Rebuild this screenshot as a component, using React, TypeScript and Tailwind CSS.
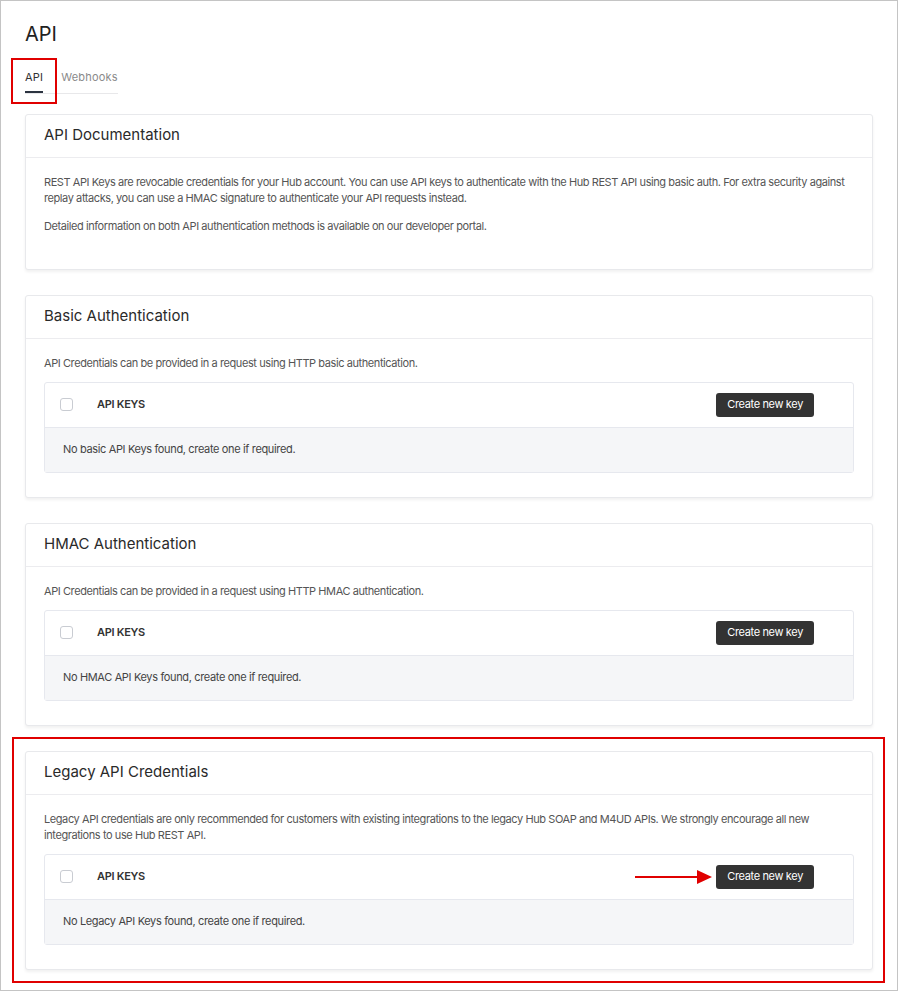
const font = { fontFamily: 'Inter, "Noto Sans", sans-serif' }

type KeysTableProps = {
  empty: string
  arrow?: boolean
}

const KeysTable = ({ empty, arrow }: KeysTableProps) => (
  <div className="rounded-[3px] border border-[#e6e8ee]">
    <div className="flex h-[44px] items-center pl-[15px] pr-[39px]">
      <span className="h-[13px] w-[13px] rounded-[3px] border border-[#c9ccd2] bg-white" />
      <span className="ml-[24px] text-[11px] font-semibold tracking-[-0.3px] text-[#333]">API KEYS</span>
      <div className="ml-auto flex items-center">
        {arrow && (
          <svg width="78" height="16" viewBox="0 0 78 16" className="mr-[3px]">
            <line x1="0" y1="8" x2="64" y2="8" stroke="#e00000" strokeWidth="2" />
            <polygon points="62,1 77,8 62,15" fill="#e00000" />
          </svg>
        )}
        <button className="h-[24px] rounded-[3px] bg-[#333333] px-[11px] text-[11px] tracking-[-0.35px] text-white">
          Create new key
        </button>
      </div>
    </div>
    <div className="flex h-[45px] items-center border-t border-[#e6e8ee] bg-[#f5f6f8] pl-[18px] text-[11px] tracking-[-0.35px] text-[#444]">
      {empty}
    </div>
  </div>
)

type CardProps = {
  title: string
  children: React.ReactNode
}

const Card = ({ title, children }: CardProps) => (
  <div className="rounded-[3px] border border-[#e8e9ec] bg-white shadow-[0_2px_3px_rgba(0,0,0,0.06)]">
    <div className="flex h-[43px] items-center border-b border-[#ececef] px-[18px] text-[15px] text-[#2a2a2a]">
      {title}
    </div>
    <div className="px-[18px] pt-[16px] pb-[24px]">{children}</div>
  </div>
)

const body = 'text-[11px] leading-[16px] tracking-[-0.42px] text-[#555]'

export default function App() {
  return (
    <div style={font} className="h-[991px] w-[898px] border border-[#c4c4c4] bg-white">
      <div className="px-[24px] pt-[20px]">
        <h1 className="text-[20px] leading-[26px] text-[#222]">API</h1>

        <div className="mt-[22px] inline-flex gap-[18px] border-b border-[#e8e8ea] text-[11px] tracking-[0.2px]">
          <div className="relative border-b-2 border-[#2b3340] pb-[5px] text-[#333]">
            API
            <div className="absolute -left-[14px] -right-[14px] -top-[11px] -bottom-[13px] border-2 border-[#e00000]" />
          </div>
          <div className="pb-[5px] text-[#8a8a8a]">Webhooks</div>
        </div>

        <div className="mt-[20px] flex flex-col gap-[25px]">
          <Card title="API Documentation">
            <p className={body}>
              REST API Keys are revocable credentials for your Hub account. You can use API keys to authenticate with the Hub REST API using basic auth. For extra security against replay attacks, you can use a HMAC signature to authenticate your API requests instead.
            </p>
            <p className={`mt-[12px] mb-[11px] ${body}`}>
              Detailed information on both API authentication methods is available on our developer portal.
            </p>
          </Card>

          <Card title="Basic Authentication">
            <p className={`mb-[11px] ${body}`}>
              API Credentials can be provided in a request using HTTP basic authentication.
            </p>
            <KeysTable empty="No basic API Keys found, create one if required." />
          </Card>

          <Card title="HMAC Authentication">
            <p className={`mb-[11px] ${body}`}>
              API Credentials can be provided in a request using HTTP HMAC authentication.
            </p>
            <KeysTable empty="No HMAC API Keys found, create one if required." />
          </Card>

          <div className="relative">
            <div className="absolute -left-[13px] -right-[12px] -top-[14px] -bottom-[13px] border-2 border-[#e00000]" />
            <Card title="Legacy API Credentials">
              <p className={`mb-[11px] ${body}`}>
                Legacy API credentials are only recommended for customers with existing integrations to the legacy Hub SOAP and M4UD APIs. We strongly encourage all new integrations to use Hub REST API.
              </p>
              <KeysTable empty="No Legacy API Keys found, create one if required." arrow />
            </Card>
          </div>
        </div>
      </div>
    </div>
  )
}
